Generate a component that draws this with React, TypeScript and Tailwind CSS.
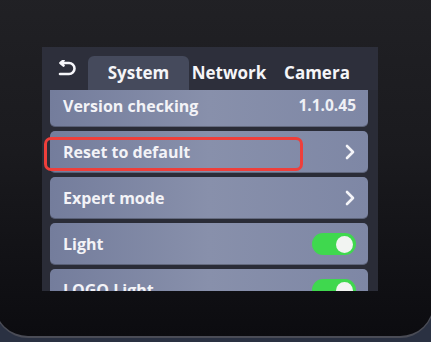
import React from "react";

const font = { fontFamily: '"Open Sans", "Noto Sans", sans-serif' };

function Chevron() {
  return (
    <svg width="12" height="16" viewBox="0 0 12 16" fill="none">
      <path d="M3 2 L9 8 L3 14" stroke="#f4f4f8" strokeWidth="2.6" strokeLinecap="round" strokeLinejoin="round" />
    </svg>
  );
}

function Toggle() {
  return (
    <div className="w-[44px] h-[22px] rounded-full bg-[#3fd84e] flex items-center justify-end pr-[3px]">
      <div className="w-[17px] h-[17px] rounded-full bg-[#f2f4f2]" />
    </div>
  );
}

function Row({ label, right, outline }: { label: string; right?: React.ReactNode; outline?: boolean }) {
  return (
    <div className="relative h-[42px] shrink-0 rounded-[5px] bg-gradient-to-r from-[#747d9c] via-[#8890ab] to-[#7e87a5] flex items-center justify-between pl-[13px] pr-[12px] shadow-[inset_0_-1px_0_rgba(0,0,0,0.25)]">
      <span className="text-[16px] font-bold text-[#f3f3f7] tracking-[0px]">{label}</span>
      {right}
      {outline && (
        <div className="absolute left-[-6px] top-[6px] w-[259px] h-[34px] rounded-[7px] border-[3px] border-[#ee3f3b]" />
      )}
    </div>
  );
}

export default function App() {
  return (
    <div className="w-[431px] h-[342px] overflow-hidden bg-[#2a3142] relative" style={font}>
      <div className="w-[440px] h-[368px] -ml-[6px] -mt-[30px] rounded-[34px] bg-gradient-to-b from-[#222226] via-[#1a1a1e] to-[#0c0c10] border-b-[2px] border-x-[1px] border-[#4a4c56] pt-[77px] pl-[47px]">
        <div className="w-[336px] h-[244px] bg-[#2a2c37] flex flex-col overflow-hidden">
          <div className="h-[43px] shrink-0 flex items-end bg-[#2d2f3b]">
            <div className="w-[46px] h-[43px] flex items-center justify-center pl-[2px]">
              <svg width="22" height="17" viewBox="0 0 22 17" fill="none">
                <path d="M6 3 H14 A5.5 5.5 0 0 1 14 14 H5" stroke="#f6f6fa" strokeWidth="2.6" strokeLinecap="round" strokeLinejoin="round" />
                <path d="M8.5 0.5 L5.5 3 L8.5 5.5" stroke="#f6f6fa" strokeWidth="2.6" strokeLinecap="round" strokeLinejoin="round" />
              </svg>
            </div>
            <div className="w-[101px] h-[34px] rounded-t-[6px] bg-[#454a5c] flex items-center justify-center text-[17px] font-bold text-[#f5f5f8]">
              System
            </div>
            <div className="w-[80px] h-[34px] flex items-center justify-center text-[17px] font-bold text-[#f5f5f8]">
              Network
            </div>
            <div className="w-[96px] h-[34px] flex items-center justify-center text-[17px] font-bold text-[#f5f5f8]">
              Camera
            </div>
          </div>
          <div className="flex-1 overflow-hidden px-[8px] pr-[10px]">
            <div className="-mt-[5px] flex flex-col gap-[4px]">
              <Row label="Version checking" right={<span className="text-[15.5px] font-bold text-[#eef0f5]">1.1.0.45</span>} />
              <Row label="Reset to default" right={<Chevron />} outline />
              <Row label="Expert mode" right={<Chevron />} />
              <Row label="Light" right={<Toggle />} />
              <Row label="LOGO Light" right={<Toggle />} />
            </div>
          </div>
        </div>
      </div>
    </div>
  );
}
